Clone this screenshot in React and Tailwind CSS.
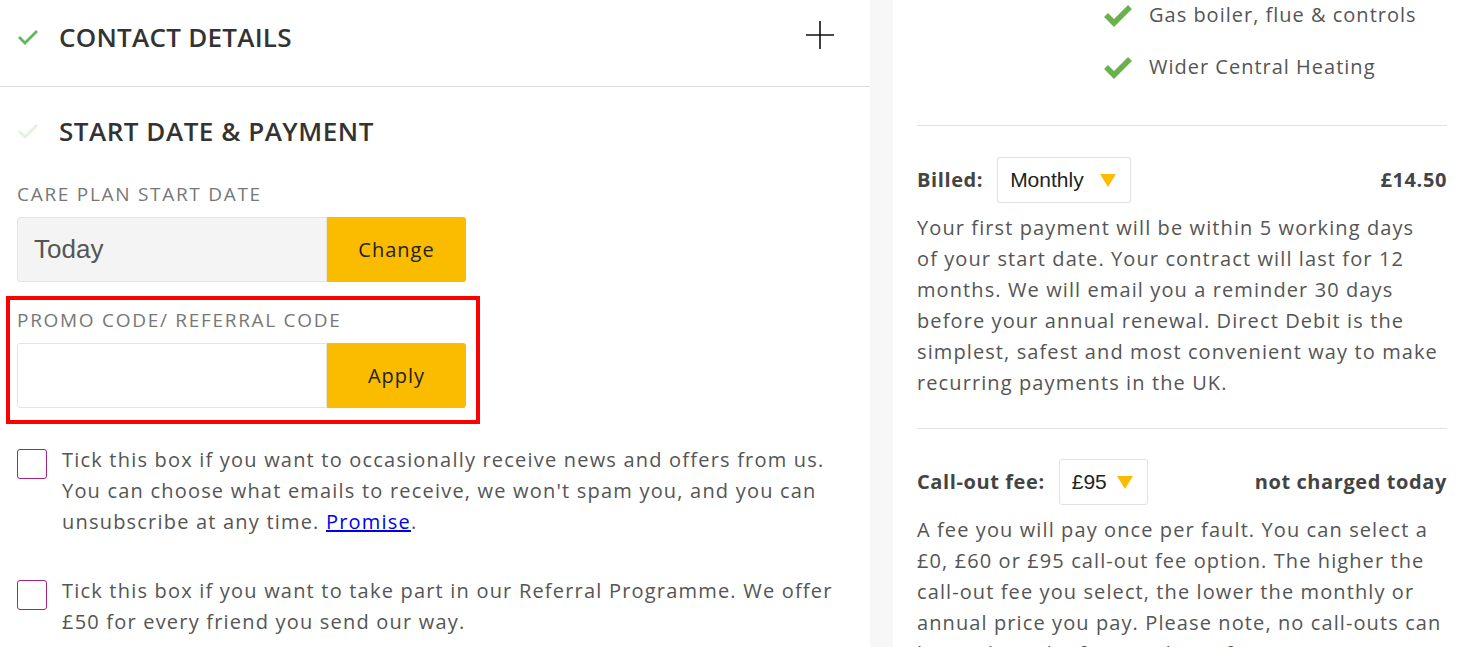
import React from 'react'

const bodyText = "text-[20px] leading-[31px] tracking-[0.06em] text-[#555]"
const strong = "text-[20px] font-bold tracking-[0.03em] text-[#444]"

const billingLines = [
  'Your first payment will be within 5 working days',
  'of your start date. Your contract will last for 12',
  'months. We will email you a reminder 30 days',
  'before your annual renewal. Direct Debit is the',
  'simplest, safest and most convenient way to make',
  'recurring payments in the UK.',
]

const calloutLines = [
  'A fee you will pay once per fault. You can select a',
  '£0, £60 or £95 call-out fee option. The higher the',
  'call-out fee you select, the lower the monthly or',
  'annual price you pay. Please note, no call-outs can',
  'be made in the first 14 days of your agreement.',
]

function TickThin({ faded }) {
  return (
    <svg width="22" height="18" viewBox="0 0 22 18" className="shrink-0">
      <polyline
        points="2,9 8,15 20,3"
        fill="none"
        stroke={faded ? '#e3f1df' : '#5cb85c'}
        strokeWidth="2.8"
      />
    </svg>
  )
}

function TickBold() {
  return (
    <svg width="30" height="24" viewBox="0 0 30 24" className="shrink-0">
      <polyline points="3,12 11,20 27,4" fill="none" stroke="#6ab04c" strokeWidth="5.5" />
    </svg>
  )
}

function Plus() {
  return (
    <svg width="30" height="30" viewBox="0 0 30 30" className="shrink-0">
      <path d="M15 1V29M1 15H29" stroke="#111" strokeWidth="1.6" />
    </svg>
  )
}

function Caret() {
  return (
    <svg width="16" height="13" viewBox="0 0 16 13" className="shrink-0">
      <polygon points="0,0 16,0 8,13" fill="#fbbc00" />
    </svg>
  )
}

function Checkbox() {
  return <span className="mt-[5px] h-[30px] w-[30px] shrink-0 rounded-[3px] border border-[#a3237e]" />
}

function Select({ value, className }) {
  return (
    <div className={`flex h-[46px] items-center rounded-[3px] border border-[#e2e2e2] pl-[12px] pr-[14px] font-['Liberation_Sans',sans-serif] text-[21px] text-[#222] ${className}`}>
      <span>{value}</span>
      <Caret />
    </div>
  )
}

function Lines({ lines }) {
  return (
    <p className={`mt-[9px] text-[20px] leading-[31px] tracking-[0.055em] text-[#555]`}>
      {lines.map((line) => (
        <span key={line} className="block whitespace-nowrap">{line}</span>
      ))}
    </p>
  )
}

function Field({ label, value, button, shaded }) {
  return (
    <div>
      <div className="text-[19px] leading-[24px] tracking-[0.09em] text-[#777] uppercase">{label}</div>
      <div className="mt-[11px] flex h-[65px]">
        <div
          className={`flex w-[310px] items-center rounded-l-[3px] border border-[#e4e4e4] px-[16px] font-['Liberation_Sans',sans-serif] text-[26px] text-[#555] ${
            shaded ? 'bg-[#f4f4f4]' : 'bg-white'
          }`}
        >
          {value}
        </div>
        <button className="flex w-[139px] items-center justify-center rounded-r-[3px] bg-[#fbbc00] text-[20px] tracking-[0.05em] text-[#222]">
          {button}
        </button>
      </div>
    </div>
  )
}

export default function App() {
  return (
    <div className="flex h-[647px] overflow-hidden bg-white font-['Open_Sans',sans-serif]">
      {/* checkout steps */}
      <div className="w-[870px] shrink-0">
        <div className="flex h-[87px] items-start border-b border-[#ddd] pl-[17px] pr-[35px] pt-[20px]">
          <div className="flex h-[34px] flex-1 items-center">
            <TickThin />
            <h2 className="ml-[20px] text-[26px] font-semibold tracking-[0.01em] text-[#333]">CONTACT DETAILS</h2>
            <div className="-mt-[5px] ml-auto">
              <Plus />
            </div>
          </div>
        </div>

        <div className="px-[17px] pt-[27px]">
          <div className="flex h-[34px] items-center">
            <TickThin faded />
            <h2 className="ml-[20px] text-[26px] font-semibold tracking-[0.02em] text-[#333]">START DATE &amp; PAYMENT</h2>
          </div>

          <div className="mt-[34px]">
            <Field label="Care plan start date" value="Today" button="Change" shaded />
          </div>

          <div className="-ml-[11px] mt-[14px] w-[474px] border-4 border-[#f00] pb-[12px] pl-[7px] pr-[10px] pt-[8px]">
            <Field label="Promo code/ referral code" value="" button="Apply" />
          </div>

          <label className="mt-[20px] flex gap-[15px]">
            <Checkbox />
            <p className={bodyText}>
              Tick this box if you want to occasionally receive news and offers from us. You can choose what emails to
              receive, we won't spam you, and you can unsubscribe at any time.{' '}
              <a href="#" className="text-[#00e] underline">Promise</a>.
            </p>
          </label>

          <label className="mt-[38px] flex gap-[15px]">
            <Checkbox />
            <p className={bodyText}>
              Tick this box if you want to take part in our Referral Programme. We offer £50 for every friend you send
              our way.
            </p>
          </label>
        </div>
      </div>

      <div className="w-[23px] shrink-0 bg-[#f7f7f7]" />

      {/* plan summary */}
      <div className="flex-1 pl-[24px] pr-[12px]">
        <ul className="-mt-[11px] pl-[186px]">
          {['Gas boiler, flue & controls', 'Wider Central Heating'].map((item) => (
            <li key={item} className="flex h-[52px] items-center gap-[16px] text-[20px] tracking-[0.05em] text-[#555]">
              <TickBold />
              {item}
            </li>
          ))}
        </ul>

        <div className="mt-[32px] border-t border-[#e2e2e2]" />

        <div className="mt-[31px] flex items-center">
          <span className={strong}>Billed:</span>
          <Select value="Monthly" className="ml-[14px] gap-[16px]" />
          <span className={`ml-auto ${strong}`}>£14.50</span>
        </div>
        <Lines lines={billingLines} />

        <div className="mt-[30px] border-t border-[#e2e2e2]" />

        <div className="mt-[30px] flex items-center">
          <span className={strong}>Call-out fee:</span>
          <Select value="£95" className="ml-[14px] gap-[10px]" />
          <span className={`ml-auto ${strong}`}>not charged today</span>
        </div>
        <Lines lines={calloutLines} />
      </div>
    </div>
  )
}
